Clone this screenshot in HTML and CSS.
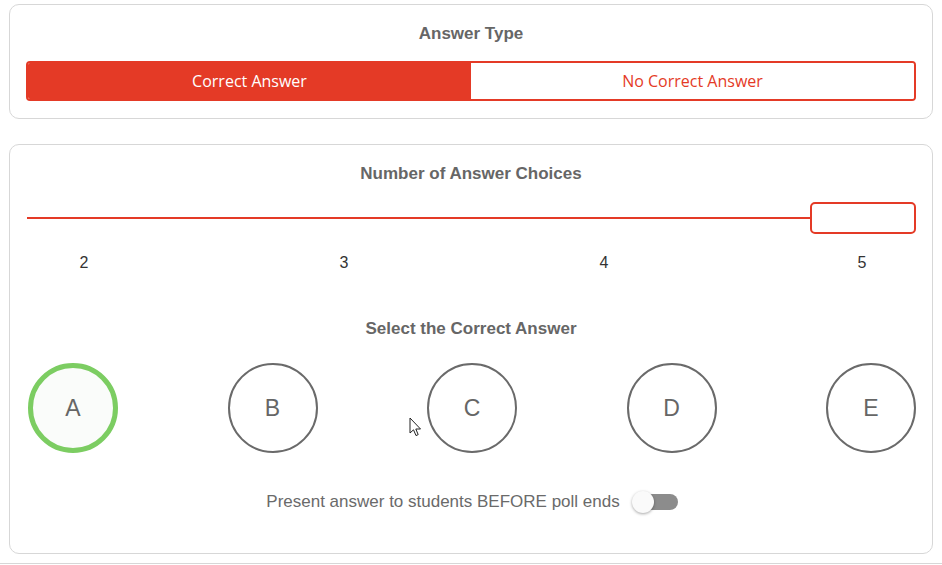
FILE: index.html
```html
<!DOCTYPE html>
<html>
<head>
<meta charset="utf-8">
<link rel="stylesheet" href="styles.css">
</head>
<body>
<div class="page">
  <section class="card card-type">
    <h2 class="title">Answer Type</h2>
    <div class="segmented">
      <div class="seg seg-active">Correct Answer</div>
      <div class="seg">No Correct Answer</div>
    </div>
  </section>

  <section class="card card-choices">
    <h2 class="title">Number of Answer Choices</h2>
    <div class="slider">
      <div class="slider-track"></div>
      <div class="slider-thumb"></div>
    </div>
    <div class="ticks">
      <span class="tick">2</span>
      <span class="tick">3</span>
      <span class="tick">4</span>
      <span class="tick">5</span>
    </div>

    <h2 class="title title-select">Select the Correct Answer</h2>
    <div class="choices">
      <div class="choice choice-selected">A</div>
      <div class="choice">B</div>
      <div class="choice">C</div>
      <div class="choice">D</div>
      <div class="choice">E</div>
    </div>

    <div class="toggle-row">
      <span class="toggle-label">Present answer to students BEFORE poll ends</span>
      <span class="toggle"><span class="toggle-knob"></span></span>
    </div>
  </section>
</div>
<div class="divider"></div>

<svg class="cursor" width="14" height="22" viewBox="0 0 14 22" xmlns="http://www.w3.org/2000/svg">
  <path d="M1 1 L1 16 L4.5 12.8 L7 18.6 L9.2 17.6 L6.8 12 L11.5 12 Z" fill="#fff" stroke="#222" stroke-width="1" stroke-linejoin="round"/>
</svg>
</body>
</html>
```

FILE: styles.css
```css
html, body {
  margin: 0;
  padding: 0;
  background: #ffffff;
}

body {
  width: 942px;
  height: 565px;
  overflow: hidden;
  position: relative;
  font-family: "Liberation Sans", Arial, sans-serif;
}

.page {
  padding: 4px 9px 0 9px;
  display: flex;
  flex-direction: column;
  gap: 25px;
}

.card {
  border: 1px solid #d7d7d7;
  border-radius: 10px;
  background: #fff;
  padding: 20px 16px 17px 16px;
  display: flex;
  flex-direction: column;
}

.title {
  margin: 0;
  font-size: 17px;
  line-height: 18px;
  font-weight: bold;
  color: #666666;
  text-align: center;
}

/* segmented control */
.segmented {
  margin-top: 18px;
  height: 40px;
  border: 2px solid #e43a26;
  border-radius: 4px;
  box-sizing: border-box;
  display: flex;
  overflow: hidden;
}

.seg {
  flex: 1;
  display: flex;
  align-items: center;
  justify-content: center;
  font-family: "Open Sans", "Noto Sans", sans-serif;
  font-size: 16px;
  color: #e43a26;
  background: #fff;
}

.seg-active {
  background: #e43a26;
  color: #fff;
}

/* slider */
.card-choices {
  padding-bottom: 42px;
}

.slider {
  margin-top: 19px;
  height: 32px;
  display: flex;
  align-items: center;
  padding-left: 1px;
}

.slider-track {
  flex: 1;
  height: 2px;
  background: #e43a26;
}

.slider-thumb {
  width: 106px;
  height: 32px;
  box-sizing: border-box;
  border: 2px solid #e43a26;
  border-radius: 5px;
  background: #fff;
}

.ticks {
  margin-top: 20px;
  display: flex;
  justify-content: space-between;
  padding: 0 0 0 2px;
}

.tick {
  width: 112px;
  text-align: center;
  font-size: 16px;
  line-height: 18px;
  color: #333;
}

.tick:last-child {
  width: 108px;
}

.title-select {
  margin-top: 48px;
}

/* answer choices */
.choices {
  margin-top: 25px;
  display: flex;
  justify-content: space-between;
  padding-left: 2px;
}

.choice {
  width: 90px;
  height: 90px;
  box-sizing: border-box;
  border: 2px solid #6a6a6a;
  border-radius: 50%;
  display: flex;
  align-items: center;
  justify-content: center;
  font-size: 23px;
  color: #666;
  background: #fff;
}

.choice-selected {
  border: 5px solid #7ccd62;
  background: #fafcfa;
}

/* toggle */
.toggle-row {
  margin-top: 40px;
  display: flex;
  justify-content: center;
  align-items: center;
  gap: 13px;
  padding-left: 2px;
}

.toggle-label {
  font-size: 17px;
  line-height: 18px;
  color: #6a6a6a;
}

.toggle {
  position: relative;
  width: 45px;
  height: 16px;
  border-radius: 8px;
  background: #8c8c8c;
  display: inline-block;
}

.toggle-knob {
  position: absolute;
  left: -1px;
  top: -3px;
  width: 22px;
  height: 22px;
  border-radius: 50%;
  background: #fafafa;
  box-shadow: 0 1px 3px rgba(0, 0, 0, 0.35);
}

.divider {
  margin-top: 9px;
  height: 1px;
  background: #d7d7d7;
}

.cursor {
  position: absolute;
  left: 409px;
  top: 417px;
}
```
